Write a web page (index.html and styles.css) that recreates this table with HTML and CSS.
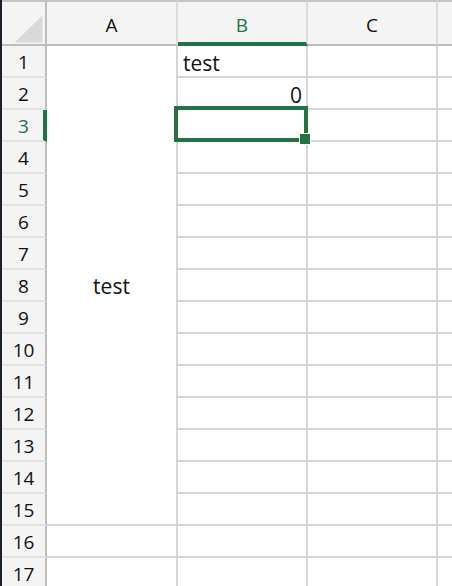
FILE: index.html
```html
<!DOCTYPE html>
<html>
<head>
<meta charset="utf-8">
<link rel="stylesheet" href="styles.css">
</head>
<body>
<div class="sheet">
  <div class="hd corner"><div class="tri"></div></div>
  <div class="hd col">A</div>
  <div class="hd col active">B</div>
  <div class="hd col">C</div>
  <div class="hd col last"></div>

  <div class="rh">1</div>
  <div class="cell merged">test</div>
  <div class="cell">test</div>
  <div class="cell"></div>
  <div class="cell last"></div>

  <div class="rh">2</div>
  <div class="cell num">0</div>
  <div class="cell"></div>
  <div class="cell last"></div>

  <div class="rh active">3</div>
  <div class="cell selected"><div class="sel"></div><div class="handle"></div></div>
  <div class="cell"></div>
  <div class="cell last"></div>

  <div class="rh">4</div><div class="cell"></div><div class="cell"></div><div class="cell last"></div>
  <div class="rh">5</div><div class="cell"></div><div class="cell"></div><div class="cell last"></div>
  <div class="rh">6</div><div class="cell"></div><div class="cell"></div><div class="cell last"></div>
  <div class="rh">7</div><div class="cell"></div><div class="cell"></div><div class="cell last"></div>
  <div class="rh">8</div><div class="cell"></div><div class="cell"></div><div class="cell last"></div>
  <div class="rh">9</div><div class="cell"></div><div class="cell"></div><div class="cell last"></div>
  <div class="rh">10</div><div class="cell"></div><div class="cell"></div><div class="cell last"></div>
  <div class="rh">11</div><div class="cell"></div><div class="cell"></div><div class="cell last"></div>
  <div class="rh">12</div><div class="cell"></div><div class="cell"></div><div class="cell last"></div>
  <div class="rh">13</div><div class="cell"></div><div class="cell"></div><div class="cell last"></div>
  <div class="rh">14</div><div class="cell"></div><div class="cell"></div><div class="cell last"></div>
  <div class="rh">15</div><div class="cell"></div><div class="cell"></div><div class="cell last"></div>
  <div class="rh">16</div><div class="cell"></div><div class="cell"></div><div class="cell"></div><div class="cell last"></div>
  <div class="rh">17</div><div class="cell"></div><div class="cell"></div><div class="cell"></div><div class="cell last"></div>
</div>
</body>
</html>
```

FILE: styles.css
```css
html, body {
  margin: 0;
  padding: 0;
  background: #ffffff;
  overflow: hidden;
}

.sheet {
  display: grid;
  grid-template-columns: 45px 131px 130px 130px 1fr;
  grid-template-rows: 46px repeat(17, 32px);
  width: 452px;
  height: 586px;
  box-sizing: border-box;
  border-left: 2px solid #1a202c;
  overflow: hidden;
  font-family: "Open Sans", "Liberation Sans", sans-serif;
  color: #111111;
}

.hd {
  box-sizing: border-box;
  background: #f4f4f4;
  border-top: 2px solid #c4c4c4;
  border-bottom: 2px solid #bdbdbd;
  border-right: 2px solid #dcdcdc;
  display: flex;
  align-items: center;
  justify-content: center;
  font-size: 19px;
  padding-top: 4px;
}

.hd.corner {
  border-right: 2px solid #bdbdbd;
  position: relative;
  padding: 0;
}

.tri {
  width: 28px;
  height: 27px;
  margin: 12px 0 0 10px;
  background: #d9d9d9;
  clip-path: polygon(100% 0, 100% 100%, 0 100%);
}

.hd.active {
  color: #217346;
  border-bottom: 4px solid #217346;
  padding-top: 6px;
}

.hd.last {
  border-right: none;
}

.rh {
  grid-column: 1;
  box-sizing: border-box;
  background: #f4f4f4;
  border-right: 2px solid #bdbdbd;
  border-bottom: 2px solid #e3e3e3;
  display: flex;
  align-items: flex-end;
  justify-content: center;
  font-size: 19px;
  line-height: 24px;
  padding-bottom: 2px;
}

.rh.active {
  color: #217346;
  border-right: 4px solid #217346;
  padding-left: 2px;
}

.cell {
  box-sizing: border-box;
  border-right: 2px solid #d6d6d6;
  border-bottom: 2px solid #d6d6d6;
  display: flex;
  align-items: flex-end;
  font-size: 21px;
  line-height: 24px;
  padding: 0 4px 1px 5px;
  white-space: nowrap;
}

.cell.last {
  border-right: none;
}

.cell.merged {
  grid-column: 2;
  grid-row: 2 / span 15;
  align-items: center;
  justify-content: center;
  padding: 2px 0 0 0;
}

.cell.num {
  justify-content: flex-end;
}

.cell.selected {
  position: relative;
}

.sel {
  position: absolute;
  top: -4px;
  left: -4px;
  right: -2px;
  bottom: -2px;
  border: 4px solid #217346;
  z-index: 2;
}

.handle {
  position: absolute;
  right: -5px;
  bottom: -5px;
  width: 10px;
  height: 10px;
  background: #217346;
  border: 1px solid #ffffff;
  z-index: 3;
}
```
